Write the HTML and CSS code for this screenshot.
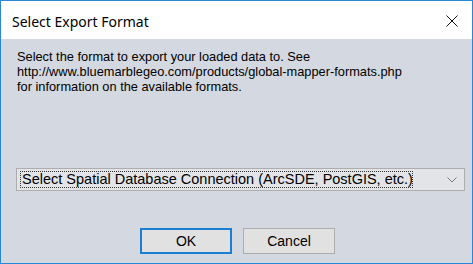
FILE: index.html
```html
<!DOCTYPE html>
<html>
<head>
<meta charset="utf-8">
<link rel="stylesheet" href="styles.css">
</head>
<body>
<div class="window">
  <div class="titlebar">
    <span class="title">Select Export Format</span>
    <svg class="close" width="12" height="12" viewBox="0 0 12 12"><path d="M0.5 0.5 L11.5 11.5 M11.5 0.5 L0.5 11.5" stroke="#111" stroke-width="1" fill="none"/></svg>
  </div>
  <div class="body">
    <p class="desc">Select the format to export your loaded data to. See<br>http://www.bluemarblegeo.com/products/global-mapper-formats.php<br>for information on the available formats.</p>
    <div class="select">
      <span class="sel-text">Select Spatial Database Connection (ArcSDE, PostGIS, etc.)</span>
      <svg class="chev" width="10" height="6" viewBox="0 0 10 6"><path d="M0.5 0.5 L5 5 L9.5 0.5" stroke="#7a7a7a" stroke-width="1" fill="none"/></svg>
    </div>
    <div class="buttons">
      <button class="btn btn-default">OK</button>
      <button class="btn">Cancel</button>
    </div>
  </div>
</div>
</body>
</html>
```
FILE: styles.css
```css
html, body {
  margin: 0;
  padding: 0;
  width: 473px;
  height: 264px;
  overflow: hidden;
}
.window {
  box-sizing: border-box;
  width: 473px;
  height: 264px;
  border: 1px solid #2a86d6;
  display: flex;
  flex-direction: column;
  background: #d4d8e0;
}
.titlebar {
  height: 38px;
  background: #ffffff;
  display: flex;
  align-items: center;
  justify-content: space-between;
  padding: 0 14px 0 11px;
  flex-shrink: 0;
}
.title {
  font-family: "Noto Sans", sans-serif;
  font-size: 14px;
  color: #000;
  position: relative;
  top: 1px;
}
.close {
  display: block;
  margin-top: 2px;
}
.body {
  flex: 1;
  display: flex;
  flex-direction: column;
  padding: 10px 8px 0 15px;
  font-family: "Liberation Sans", Arial, sans-serif;
  font-size: 12.8px;
  color: #000;
}
.desc {
  margin: 0 0 0 1px;
  line-height: 15px;
}
.select {
  margin-top: 74px;
  width: 449px;
  height: 23px;
  box-sizing: border-box;
  border: 1px solid #adadad;
  background: #e3e4e8;
  display: flex;
  align-items: center;
  padding: 0 3px;
}
.sel-text {
  flex: 1;
  border: 1px dotted #333;
  height: 15px;
  line-height: 15px;
  padding: 0 1px;
  margin-right: 34px;
  font-size: 14.5px;
  white-space: nowrap;
  overflow: hidden;
}
.chev {
  display: block;
  margin-right: 4px;
}
.buttons {
  display: flex;
  gap: 11px;
  margin-top: 37px;
  margin-left: 124px;
}
.btn {
  width: 92px;
  height: 26px;
  box-sizing: border-box;
  border: 1px solid #adadad;
  background: #e1e1e1;
  font-family: "Liberation Sans", Arial, sans-serif;
  font-size: 14px;
  color: #000;
  padding: 0;
}
.btn-default {
  border: 2px solid #1a7fd4;
}
```
